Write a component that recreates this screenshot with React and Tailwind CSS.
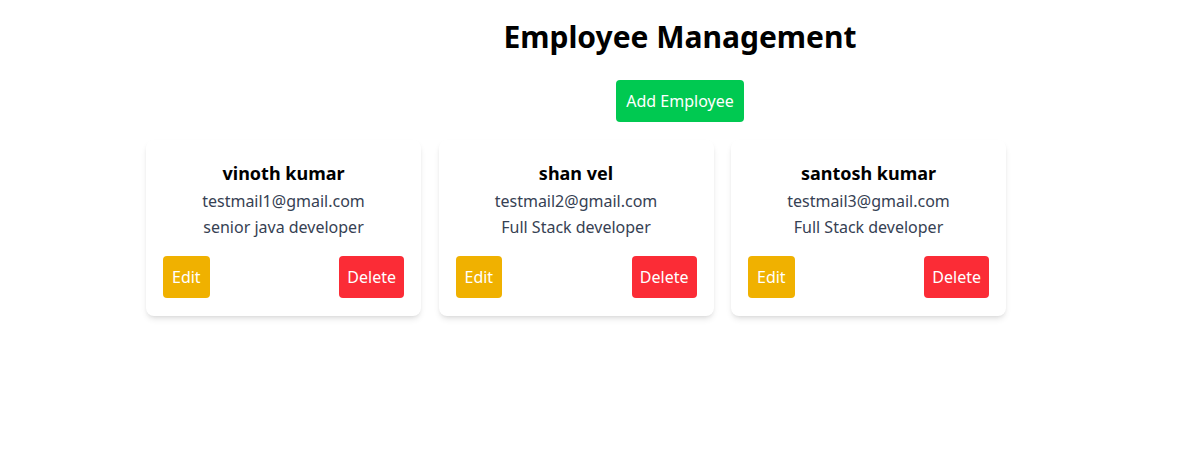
import React from 'react';

const employees = [
  { id: 1, name: 'vinoth kumar', email: 'testmail1@gmail.com', role: 'senior java developer' },
  { id: 2, name: 'shan vel', email: 'testmail2@gmail.com', role: 'Full Stack developer' },
  { id: 3, name: 'santosh kumar', email: 'testmail3@gmail.com', role: 'Full Stack developer' },
];

function EmployeeCard({ employee }) {
  return (
    <div className="w-[275px] bg-white rounded-lg shadow-md px-[17px] pt-[19px] pb-[18px] text-center">
      <h2 className="text-lg font-bold leading-[28px] text-black">{employee.name}</h2>
      <p className="mt-px leading-[26px] text-gray-700">{employee.email}</p>
      <p className="leading-[26px] text-gray-700">{employee.role}</p>
      <div className="mt-4 flex justify-between">
        <button className="h-[42px] px-[9px] rounded bg-yellow-500 text-white">Edit</button>
        <button className="h-[42px] px-2 rounded bg-red-500 text-white">Delete</button>
      </div>
    </div>
  );
}

export default function App() {
  return (
    <div className="min-h-screen bg-white font-['Noto_Sans',sans-serif]">
      <div className="pl-[160px] pt-[17px] flex flex-col items-center">
        <h1 className="text-3xl font-bold leading-[40px] text-black">Employee Management</h1>
        <button className="mt-[23px] h-[42px] px-[10px] rounded bg-green-500 text-white">Add Employee</button>
      </div>
      <div className="mt-[18px] ml-[146px] flex gap-[17.5px]">
        {employees.map((emp) => (
          <EmployeeCard key={emp.id} employee={emp} />
        ))}
      </div>
    </div>
  );
}
